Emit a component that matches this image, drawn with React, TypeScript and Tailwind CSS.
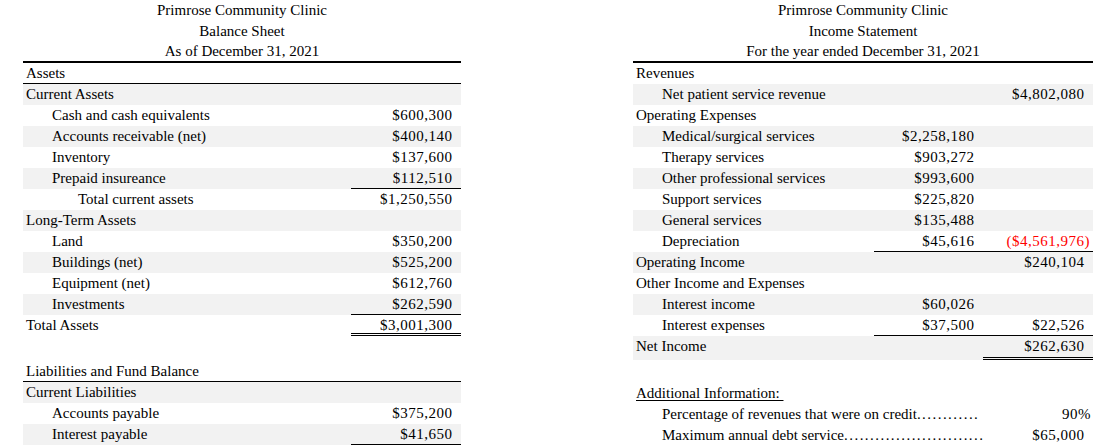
import type { ReactNode } from 'react'

type Line = 'single' | 'double' | undefined

const shadeBg = 'bg-[#f2f2f2]'

const Amount = ({ v, neg, line, className = '' }: { v?: string; neg?: boolean; line?: Line; className?: string }) => {
  const border = line === 'single' ? 'border-b border-black' : line === 'double' ? 'border-b-[3px] border-double border-black' : ''
  return (
    <div className={`text-right pr-[3px] leading-[21px] tracking-[0.5px] ${border} ${className}`}>
      {v && (neg ? (
        <span className="text-[#ff0000]">({v})</span>
      ) : (
        <>
          <span>{v}</span>
          <span className="invisible">)</span>
        </>
      ))}
    </div>
  )
}

const Label = ({ level = 0, children }: { level?: number; children: ReactNode }) => {
  const pad = level === 0 ? 'pl-[3px]' : level === 1 ? 'pl-[29px]' : 'pl-[55px]'
  return <div className={`${pad} leading-[21px] whitespace-nowrap`}>{children}</div>
}

const Header = ({ lines }: { lines: string[] }) => (
  <div className="h-[63px] border-b-2 border-black text-center">
    {lines.map((l) => (
      <div key={l} className="leading-[20.5px]">{l}</div>
    ))}
  </div>
)

type BRow = { label: string; level?: number; amt?: string; shade?: boolean; line?: Line; h?: string }

const assets: BRow[] = [
  { label: 'Current Assets', shade: true },
  { label: 'Cash and cash equivalents', level: 1, amt: '$600,300' },
  { label: 'Accounts receivable (net)', level: 1, amt: '$400,140', shade: true },
  { label: 'Inventory', level: 1, amt: '$137,600' },
  { label: 'Prepaid insureance', level: 1, amt: '$112,510', shade: true, line: 'single' },
  { label: 'Total current assets', level: 2, amt: '$1,250,550' },
  { label: 'Long-Term Assets', shade: true },
  { label: 'Land', level: 1, amt: '$350,200' },
  { label: 'Buildings (net)', level: 1, amt: '$525,200', shade: true },
  { label: 'Equipment (net)', level: 1, amt: '$612,760' },
  { label: 'Investments', level: 1, amt: '$262,590', shade: true, line: 'single' },
  { label: 'Total Assets', amt: '$3,001,300', line: 'double', h: 'h-[24px]' },
]

const liabilities: BRow[] = [
  { label: 'Current Liabilities', shade: true },
  { label: 'Accounts payable', level: 1, amt: '$375,200' },
  { label: 'Interest payable', level: 1, amt: '$41,650', shade: true, line: 'single' },
]

const BalanceRow = ({ r }: { r: BRow }) => (
  <div className={`grid grid-cols-[328px_110px] ${r.h ?? 'h-[21px]'} ${r.shade ? shadeBg : ''}`}>
    <Label level={r.level}>{r.label}</Label>
    <Amount v={r.amt} line={r.line} className="h-[21px]" />
  </div>
)

type IRow = { label: string; level?: number; a?: string; b?: string; neg?: boolean; shade?: boolean; line?: Line }

const income: IRow[] = [
  { label: 'Revenues' },
  { label: 'Net patient service revenue', level: 1, b: '$4,802,080', shade: true },
  { label: 'Operating Expenses' },
  { label: 'Medical/surgical services', level: 1, a: '$2,258,180', shade: true },
  { label: 'Therapy services', level: 1, a: '$903,272' },
  { label: 'Other professional services', level: 1, a: '$993,600', shade: true },
  { label: 'Support services', level: 1, a: '$225,820' },
  { label: 'General services', level: 1, a: '$135,488', shade: true },
  { label: 'Depreciation', level: 1, a: '$45,616', b: '$4,561,976', neg: true, line: 'single' },
  { label: 'Operating Income', b: '$240,104', shade: true },
  { label: 'Other Income and Expenses' },
  { label: 'Interest income', level: 1, a: '$60,026', shade: true },
  { label: 'Interest expenses', level: 1, a: '$37,500', b: '$22,526', line: 'single' },
]

const IncomeRow = ({ r }: { r: IRow }) => (
  <div className={`grid grid-cols-[241px_109px_110px] h-[21px] ${r.shade ? shadeBg : ''}`}>
    <Label level={r.level}>{r.label}</Label>
    <Amount v={r.a} line={r.line} className="h-[21px]" />
    <Amount v={r.b} neg={r.neg} line={r.line} className="h-[21px]" />
  </div>
)

// dotted leader, dots counted to end near the value column
const Leader = ({ label, dots, value, pct }: { label: string; dots: number; value: string; pct?: boolean }) => (
  <div className="grid grid-cols-[350px_110px] h-[21px]">
    <div className="pl-[29px] leading-[21px] whitespace-nowrap">
      {label}
      <span className="tracking-[1.45px]">{'.'.repeat(dots)}</span>
    </div>
    {pct ? (
      <div className="text-right pr-[2px] leading-[21px] tracking-[0.5px]">{value}</div>
    ) : (
      <Amount v={value} />
    )}
  </div>
)

export default function App() {
  return (
    <div className="w-[1104px] h-[446px] overflow-hidden bg-white text-black text-[15px] font-['Liberation_Serif',serif] flex pl-[23px]">
      <div className="w-[438px] flex flex-col">
        <Header lines={['Primrose Community Clinic', 'Balance Sheet', 'As of December 31, 2021']} />
        <div className="h-[21px] border-b border-black pl-[3px] leading-[20px]">Assets</div>
        {assets.map((r) => (
          <BalanceRow key={r.label} r={r} />
        ))}
        <div className="h-[21px]" />
        <div className="h-[22px] border-b border-black pl-[3px] leading-[22px]">Liabilities and Fund Balance</div>
        {liabilities.map((r) => (
          <BalanceRow key={r.label} r={r} />
        ))}
      </div>

      <div className="w-[460px] ml-[172px] flex flex-col">
        <Header lines={['Primrose Community Clinic', 'Income Statement', 'For the year ended December 31, 2021']} />
        {income.map((r) => (
          <IncomeRow key={r.label} r={r} />
        ))}
        <div className={`grid grid-cols-[241px_109px_110px] h-[24px] ${shadeBg}`}>
          <Label>Net Income</Label>
          <div />
          <Amount v="$262,630" line="double" className="h-[24px]" />
        </div>
        <div className="h-[22px]" />
        <div className="h-[22px] pl-[3px] leading-[22px]">
          <span className="underline underline-offset-[2px] decoration-1">Additional Information:&nbsp;</span>
        </div>
        <Leader label="Percentage of revenues that were on credit" dots={12} value="90%" pct />
        <Leader label="Maximum annual debt service" dots={27} value="$65,000" />
      </div>
    </div>
  )
}
